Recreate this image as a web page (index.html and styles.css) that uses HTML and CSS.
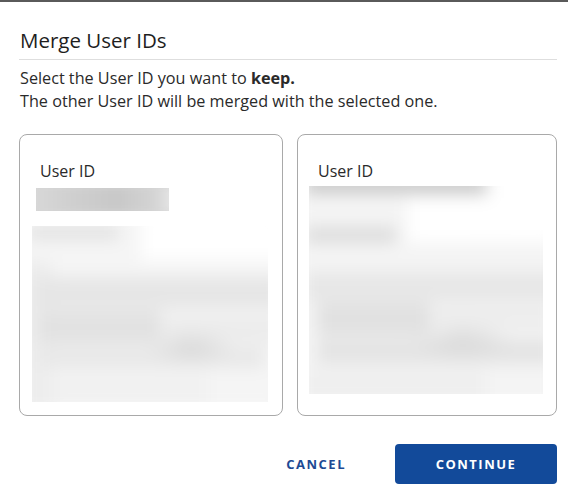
FILE: index.html
```html
<!DOCTYPE html>
<html>
<head>
<meta charset="utf-8">
<link rel="stylesheet" href="styles.css">
</head>
<body>
<div class="dialog">
  <h1 class="title">Merge User IDs</h1>
  <p class="intro">Select the User ID you want to <b>keep.</b><br>The other User ID will be merged with the selected one.</p>
  <div class="cards">
    <div class="card card-left">
      <div class="label">User ID</div>
      <div class="redact bar"><div class="blur bar-in"></div></div>
      <div class="redact block-left"><div class="blur left-in"></div></div>
    </div>
    <div class="card card-right">
      <div class="label">User ID</div>
      <div class="redact block-right"><div class="blur right-in"></div></div>
    </div>
  </div>
  <div class="actions">
    <button class="btn btn-text">CANCEL</button>
    <button class="btn btn-primary">CONTINUE</button>
  </div>
</div>
</body>
</html>
```
FILE: styles.css
```css
html, body {
  margin: 0;
  padding: 0;
  background: #fff;
}
body {
  font-family: "Open Sans", "Liberation Sans", sans-serif;
  color: #222;
  border-top: 2px solid #5a5a5a;
  height: 491px;
  overflow: hidden;
}
.dialog {
  padding: 0 11px 0 19px;
}
.title {
  margin: 0;
  padding: 26px 0 7px 1px;
  font-size: 20.5px;
  font-weight: 400;
  line-height: 24px;
  border-bottom: 1px solid #dedede;
  color: #1e1e1e;
}
.intro {
  margin: 7px 0 0 1px;
  font-size: 16.2px;
  line-height: 23px;
  color: #2a2a2a;
}
.intro b {
  font-weight: 700;
}
.cards {
  display: flex;
  gap: 14px;
  margin-top: 21px;
}
.card {
  box-sizing: border-box;
  height: 282px;
  border: 1px solid #a9a9a9;
  border-radius: 8px;
  display: flex;
  flex-direction: column;
}
.card-left {
  width: 264px;
}
.card-right {
  width: 260px;
}
.label {
  font-size: 16px;
  line-height: 22px;
  margin-top: 25px;
  padding-left: 20px;
  color: #2a2a2a;
}
.redact {
  overflow: hidden;
}
.blur {
  width: 100%;
  height: 100%;
  transform: scale(1.12);
  filter: blur(7px);
}
.bar {
  width: 133px;
  height: 23px;
  margin: 6px 0 0 16px;
  background: #d6d6d6;
}
.bar-in {
  background: linear-gradient(90deg, #d9d9d9 0%, #cfcfcf 30%, #c8c8c8 60%, #d4d4d4 85%, #ebebeb 100%);
  filter: blur(4px);
}
.block-left {
  width: 236px;
  height: 176px;
  margin: 15px 0 0 12px;
  background: #f6f6f6;
}
.left-in {
  background:
    radial-gradient(ellipse 40px 16px at 155px 118px, #d8d8d8, rgba(216,216,216,0)),
    linear-gradient(#e3e3e3, #e3e3e3) 10px 8px / 80px 14px no-repeat,
    linear-gradient(#ffffff, #ffffff) 110px 0 / 130px 40px no-repeat,
    linear-gradient(#e6e6e6, #e6e6e6) 14px 55px / 230px 28px no-repeat,
    linear-gradient(#e2e2e2, #e2e2e2) 18px 85px / 110px 30px no-repeat,
    linear-gradient(#ececec, #ececec) 130px 90px / 110px 25px no-repeat,
    linear-gradient(#e8e8e8, #e8e8e8) 20px 118px / 200px 18px no-repeat,
    linear-gradient(#ededed, #ededed) 0 40px / 30px 136px no-repeat,
    linear-gradient(#f1f1f1, #f1f1f1) 20px 140px / 150px 30px no-repeat,
    #f5f5f5;
}
.block-right {
  width: 234px;
  height: 208px;
  margin: 4px 0 0 11px;
  background: #f3f3f3;
}
.right-in {
  background:
    radial-gradient(ellipse 45px 18px at 150px 150px, #d9d9d9, rgba(217,217,217,0)),
    linear-gradient(#cbcbcb, #cbcbcb) 10px 0 / 160px 18px no-repeat,
    linear-gradient(#ffffff, #ffffff) 175px 0 / 70px 62px no-repeat,
    linear-gradient(#ffffff, #ffffff) 100px 22px / 75px 40px no-repeat,
    linear-gradient(#dcdcdc, #dcdcdc) 10px 48px / 80px 14px no-repeat,
    linear-gradient(#e7e7e7, #e7e7e7) 10px 88px / 225px 26px no-repeat,
    linear-gradient(#e1e1e1, #e1e1e1) 20px 115px / 100px 30px no-repeat,
    linear-gradient(#ededed, #ededed) 120px 118px / 110px 22px no-repeat,
    linear-gradient(#e4e4e4, #e4e4e4) 20px 148px / 210px 22px no-repeat,
    linear-gradient(#efefef, #efefef) 10px 175px / 160px 30px no-repeat,
    #f4f4f4;
}
.actions {
  display: flex;
  justify-content: flex-end;
  align-items: center;
  gap: 25px;
  margin-top: 28px;
}
.btn {
  font-family: "Open Sans", "Liberation Sans", sans-serif;
  font-weight: 700;
  font-size: 13px;
  letter-spacing: 1.5px;
  border: none;
  cursor: pointer;
  height: 40px;
}
.btn-text {
  background: transparent;
  color: #1d4a94;
  padding: 0 24px;
}
.btn-primary {
  width: 162px;
  background: #124a9a;
  color: #fff;
  border-radius: 4px;
}
```
